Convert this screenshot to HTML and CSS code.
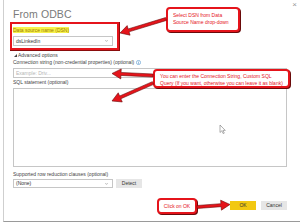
FILE: index.html
```html
<!DOCTYPE html>
<html>
<head>
<meta charset="utf-8">
<link rel="stylesheet" href="styles.css">
</head>
<body>
<div class="dialog">
  <h1 class="title">From ODBC</h1>
  <div class="label first"><span class="hl">Data source name (DSN)</span></div>
  <div class="select narrow"><span>dsLinkedIn</span><svg class="chev" viewBox="0 0 4 3" width="3" height="2"><path d="M0.5 0.5 L2 2 L3.5 0.5" fill="none" stroke="#555" stroke-width="0.8"/></svg></div>
  <div class="adv"><svg class="tri" viewBox="0 0 3 3" width="3" height="3"><path d="M3 0 L3 3 L0 3 Z" fill="#444"/></svg>Advanced options</div>
  <div class="label">Connection string (non-credential properties) (optional) <svg class="info" viewBox="0 0 6 6" width="5" height="5"><circle cx="3" cy="3" r="2.5" fill="none" stroke="#2b7cc0" stroke-width="0.6"/><path d="M3 2.6 V4.5 M3 1.4 V1.9" stroke="#2b7cc0" stroke-width="0.7"/></svg></div>
  <div class="input"><span class="ph">Example: Driv...</span></div>
  <div class="label sql">SQL statement (optional)</div>
  <div class="textarea"></div>
  <div class="label rows">Supported row reduction clauses (optional)</div>
  <div class="row">
    <div class="select narrow"><span>(None)</span><svg class="chev" viewBox="0 0 4 3" width="3" height="2"><path d="M0.5 0.5 L2 2 L3.5 0.5" fill="none" stroke="#555" stroke-width="0.8"/></svg></div>
    <div class="btn">Detect</div>
  </div>
  <div class="footer">
    <div class="btn ok">OK</div>
    <div class="btn">Cancel</div>
  </div>
  <span class="close">×</span>
</div>

<div class="dsn-box"></div>
<div class="callout c1">Select DSN from Data<br>Source Name drop-down</div>
<div class="callout c2">You can enter the Connection String, Custom SQL<br>Query (If you want, otherwise you can leave it as blank)</div>
<div class="callout c3">Click on OK</div>

<svg class="arrows" width="300" height="224" viewBox="0 0 300 224">
  <g fill="#e5141b" stroke="#6a0a0a" stroke-width="0.6" stroke-linejoin="round">
    <polygon points="166.44,20.44 129.05,31.82 130.07,35.16 120,33 127.15,25.6 128.17,28.95 165.56,17.57"/>
    <polygon points="153.07,74 121.06,72.44 121.23,68.95 112,73.5 120.75,78.93 120.92,75.44 152.93,77"/>
    <polygon points="152.40,81.63 119.64,96.01 118.23,92.80 112,101 122.25,101.96 120.84,98.75 153.60,84.37"/>
    <polygon points="197.11,208.50 221.14,206.68 221.41,210.17 230,204.5 220.65,200.19 220.92,203.68 196.89,205.50"/>
  </g>
  <path class="cursor" d="M220 125 L220 132.5 L221.8 130.8 L223.2 133.6 L224.3 133.1 L222.9 130.4 L225.3 130.4 Z" fill="#fff" stroke="#777" stroke-width="0.6"/>
</svg>
</body>
</html>
```

FILE: styles.css
```css
* { box-sizing: border-box; }
html, body {
  margin: 0;
  padding: 0;
  width: 300px;
  height: 224px;
  overflow: hidden;
  background: #fff;
}
body {
  position: relative;
  font-family: "Liberation Sans", Arial, sans-serif;
  font-size: 5px;
  line-height: 7px;
  color: #444;
}
.dialog {
  position: relative;
  margin-left: 3px;
  height: 222px;
  border-left: 1px solid #cfcfcf;
  border-bottom: 1px solid #9a9a9a;
  padding: 8px 13px 0 9px;
}
.title {
  margin: 0;
  font-size: 10.5px;
  line-height: 12px;
  font-weight: normal;
  color: #7a7a7a;
  letter-spacing: 0.1px;
}
.label { height: 7px; white-space: nowrap; }
.label.first { margin-top: 7px; }
.hl { background: #f7f24a; color: #9c7d00; }
.select {
  display: flex;
  align-items: center;
  justify-content: space-between;
  height: 10px;
  border: 1px solid #c6c6c6;
  padding: 0 4px 0 2px;
  color: #333;
  background: #fff;
  margin-top: 2px;
}
.select.narrow { width: 100px; }
.chev { display: block; }
.adv {
  margin-top: 6px;
  height: 7px;
  display: flex;
  align-items: center;
  gap: 1px;
  color: #444;
}
.tri { display: block; margin-left: 1px; }
.info { vertical-align: -1px; }
.input {
  margin-top: 2px;
  height: 10px;
  border: 1px solid #c6c6c6;
  padding-left: 2px;
  display: flex;
  align-items: center;
}
.ph { color: #b5b5b5; }
.label.sql { margin-top: 1px; }
.textarea {
  margin-top: 2px;
  height: 79px;
  border: 1px solid #c6c6c6;
}
.label.rows { margin-top: 4px; }
.row {
  margin-top: 1px;
  display: flex;
  gap: 3px;
  height: 9px;
}
.row .select { margin-top: 0; height: 9px; }
.btn {
  width: 26px;
  height: 9px;
  background: #e6e6e6;
  color: #333;
  display: flex;
  align-items: center;
  justify-content: center;
}
.btn.ok { background: #f2c811; }
.footer {
  margin-top: 13px;
  display: flex;
  justify-content: flex-end;
  gap: 5px;
}
.close {
  position: absolute;
  top: 0;
  right: 3px;
  font-size: 8px;
  line-height: 9px;
  color: #999;
}
.dsn-box {
  position: absolute;
  left: 10px;
  top: 22px;
  width: 109px;
  height: 28px;
  border: 2px solid #e5141b;
  box-shadow: 0.5px 0.5px 0 0.5px #8a0c0c;
}
.callout {
  position: absolute;
  background: #fff;
  border: 2px solid #e5141b;
  border-radius: 4px;
  box-shadow: 1px 1px 0 0 #6a0a0a;
  color: #e5141b;
  white-space: nowrap;
}
.c1 { left: 166px; top: 7px; width: 74px; height: 25px; padding: 3px 0 0 5px; }
.c2 { left: 153px; top: 69px; width: 137px; height: 19px; padding: 2px 0 0 5px; }
.c3 { left: 157px; top: 198px; width: 40px; height: 16px; line-height: 12px; text-align: center; }
.arrows {
  position: absolute;
  left: 0;
  top: 0;
  pointer-events: none;
}
```
